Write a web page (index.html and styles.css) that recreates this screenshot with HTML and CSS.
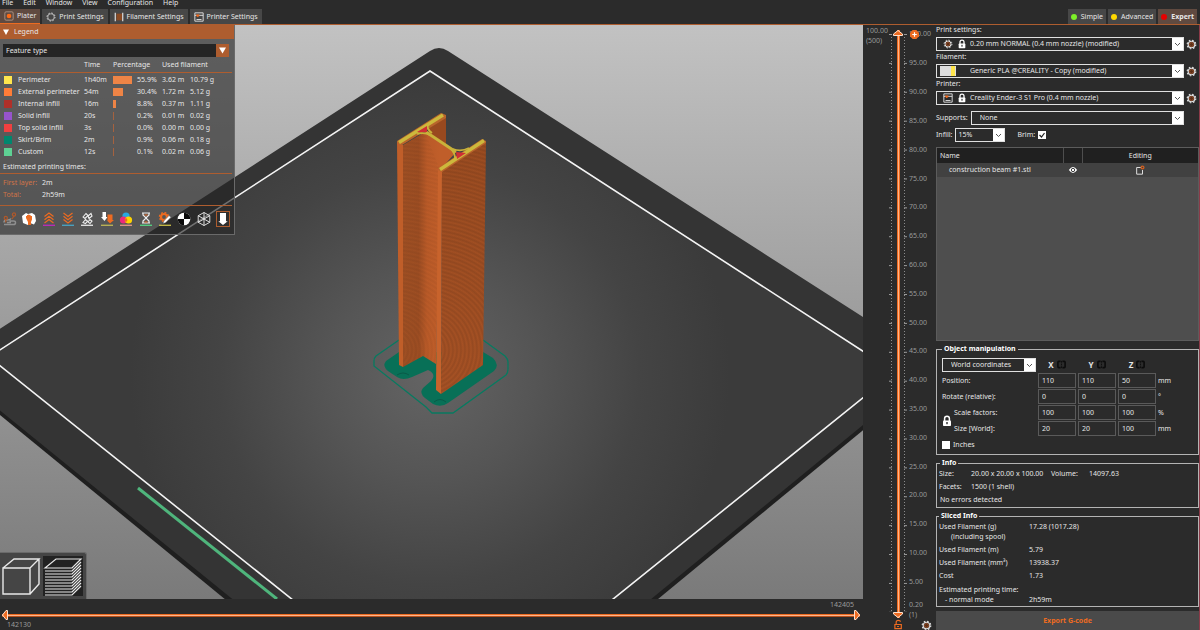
FILE: index.html
```html
<!DOCTYPE html>
<html lang="en">
<head>
  <meta charset="UTF-8">
  <meta name="viewport" content="width=device-width, initial-scale=1.0">
  <title>Slicer - Preview</title>
  <link rel="stylesheet" href="styles.css">
</head>
<body>
  <!-- Shared icons -->
  <svg class="sprite" aria-hidden="true">
    <symbol id="gear" viewBox="0 0 12 12">
      <circle cx="6" cy="6" r="3.6" fill="#2b2b2b" stroke="#e4e4e4" stroke-width="1.2"/>
      <circle cx="6" cy="6" r="4.7" fill="none" stroke="#e4e4e4" stroke-width="1.2" stroke-dasharray="1.8 1.9"/>
      <circle cx="6" cy="6" r="2.2" fill="#5c3018" stroke="#a0522a" stroke-width="1"/>
    </symbol>
    <symbol id="lock" viewBox="0 0 10 12">
      <path d="M2.6 6V3.6a2.4 2.4 0 0 1 4.8 0V6" fill="none" stroke="#fff" stroke-width="1.5"/>
      <rect x="1" y="5.4" width="8" height="5.6" rx=".8" fill="#fff"/>
      <rect x="4.3" y="7" width="1.4" height="2.2" fill="#2b2b2b"/>
    </symbol>
    <symbol id="printer" viewBox="0 0 12 12">
      <path d="M1 1h10v10H1zM1 4h10M3 9h6" fill="none" stroke="#e4e4e4" stroke-width="1.1"/>
      <path d="M2.5 3h4v1.6l-2 1.6-2-1.6z" fill="#ed6b21"/>
    </symbol>
    <symbol id="mirror" viewBox="0 0 10 10">
      <rect x="1" y="1.5" width="8" height="7" rx="1" fill="none" stroke="#0c0c0c" stroke-width="1.8"/>
      <path d="M5 0v10" stroke="#2b2b2b" stroke-width="2"/>
      <path d="M5 1v8" stroke="#0c0c0c" stroke-dasharray="2 1"/>
    </symbol>
  </svg>

  <!-- Menu -->
  <nav class="menubar">
    <a href="#">File</a>
    <a href="#">Edit</a>
    <a href="#">Window</a>
    <a href="#">View</a>
    <a href="#">Configuration</a>
    <a href="#">Help</a>
  </nav>

  <!-- Tabs and modes -->
  <header class="tabbar">
    <div class="tabs">
      <button class="tab active">
        <svg viewBox="0 0 12 12"><rect x="1" y="1" width="10" height="10" rx="1.5" fill="none" stroke="#b59b8c"/><circle cx="6" cy="6" r="2.8" fill="#ff6a14"/></svg>Plater</button>
      <button class="tab">
        <svg viewBox="0 0 12 12"><circle cx="6" cy="6" r="3.9" fill="none" stroke="#ddd" stroke-width=".8"/><circle cx="6" cy="6" r="4.8" fill="none" stroke="#ddd" stroke-width="1.2" stroke-dasharray="1.8 1.95"/></svg>Print Settings</button>
      <button class="tab">
        <svg viewBox="0 0 12 12"><path d="M1.5 1v10M10.5 1v10" stroke="#eee" stroke-width="1.3"/><rect x="3" y="2" width="6.5" height="8" fill="#8c4a22"/></svg>Filament Settings</button>
      <button class="tab"><svg><use href="#printer"/></svg>Printer Settings</button>
    </div>
    <div class="modes">
      <button class="mode"><i class="dot green"></i>Simple</button>
      <button class="mode"><i class="dot yellow"></i>Advanced</button>
      <button class="mode active"><i class="dot red"></i>Expert</button>
    </div>
  </header>

  <main class="workspace">
    <!-- 3D preview -->
    <section class="preview">
      <div class="viewport">
        <svg class="scene" viewBox="0 25 863 574" preserveAspectRatio="xMidYMid slice">
          <defs>
            <linearGradient id="sky" x1="0" y1="0" x2="0" y2="1">
              <stop offset="0" stop-color="#c2c2c2"/>
              <stop offset="1" stop-color="#7a7a7a"/>
            </linearGradient>
            <radialGradient id="bed" gradientUnits="userSpaceOnUse" cx="430" cy="375" r="300">
              <stop offset="0" stop-color="#646464"/>
              <stop offset=".35" stop-color="#555"/>
              <stop offset=".7" stop-color="#444"/>
              <stop offset="1" stop-color="#3b3b3b"/>
            </radialGradient>
            <linearGradient id="inner" gradientUnits="userSpaceOnUse" x1="403" y1="0" x2="440" y2="0">
              <stop offset="0" stop-color="#9c4e23"/>
              <stop offset=".42" stop-color="#9a4c22"/>
              <stop offset=".65" stop-color="#b95a28"/>
              <stop offset="1" stop-color="#c05e2a"/>
            </linearGradient>
            <linearGradient id="side" x1="0" y1="0" x2="0" y2="1">
              <stop offset="0" stop-color="#974a20"/>
              <stop offset="1" stop-color="#a35024"/>
            </linearGradient>
            <radialGradient id="layers" gradientUnits="userSpaceOnUse" cx="425" cy="350" r="4" spreadMethod="repeat">
              <stop offset="0" stop-color="#000" stop-opacity=".07"/>
              <stop offset=".5" stop-color="#d86a2d" stop-opacity=".08"/>
              <stop offset="1" stop-color="#000" stop-opacity=".07"/>
            </radialGradient>
            <radialGradient id="layers2" gradientUnits="userSpaceOnUse" cx="392" cy="350" r="4" spreadMethod="repeat">
              <stop offset="0" stop-color="#000" stop-opacity=".04"/>
              <stop offset=".5" stop-color="#d86a2d" stop-opacity=".05"/>
              <stop offset="1" stop-color="#000" stop-opacity=".04"/>
            </radialGradient>
          </defs>
          <rect y="25" width="863" height="574" fill="url(#sky)"/>
          <!-- bed -->
          <path d="M-56 369 442 777 930 375V350H-56z" fill="#1f1f1f"/>
          <path d="M-56 365 430 51Q439 45 448 51L930 360V370L443 770z" fill="#343434"/>
          <path d="M-11 357 430 71 895 372 453 728z" fill="url(#bed)" stroke="#f4f4f4" stroke-width="1.6"/>
          <path d="M138 488 277 599" stroke="#4fb57c" stroke-width="3"/>
          <!-- skirt and brim -->
          <path d="M399 340 376 356Q374 358 374 361V366L426 407 432 413H453L506 375Q508 373 508 369V362Q508 359 505 356L483 340" fill="none" stroke="#087a60" stroke-width="1.3"/>
          <path d="M399 352 386 361Q382 366 388 371L397 377Q403 381 412 377L428 370Q437 374 431 381L423 388Q419 393 425 398L433 404Q441 408 448 403L494 371Q500 365 493 358L483 352z" fill="#087057"/>
          <path d="M397 375q6-4 12 0M434 402q6-5 12 0" fill="none" stroke="#0a5a48"/>
          <!-- beam -->
          <path d="M428 128 446 116V146L430 140z" fill="#99491f"/>
          <path d="M403 145 425 132 456 152 440 170 436 364 423 356 403 367z" fill="url(#inner)"/>
          <path d="M403 145 425 132 440 170 436 364 423 356 403 367z" fill="url(#layers2)"/>
          <path d="M397 142 403 145V367L399 365z" fill="#c05e29"/>
          <path d="M438 169 442 171 441 394 436 390z" fill="#c8632c"/>
          <path d="M442 171 486 141 483 365 441 394z" fill="url(#side)"/>
          <path d="M442 171 486 141 483 365 441 394z" fill="url(#layers)"/>
          <!-- top layer -->
          <path d="M397 141 441 113 446 115V118L402 145 397 143zM438 168 482 139 486 141V143L442 172 438 170z" fill="#b9652b"/>
          <path d="M426 132 456 152" stroke="#c9b23a" stroke-width="3"/>
          <path d="M417 134Q425 132 430 135M428 124Q426 129 432 133M450 148Q456 153 455 161M453 149Q461 152 469 148" fill="none" stroke="#c9b23a" stroke-width="1.8"/>
          <path d="M399 142.500 443 115M440 169.500 484 140.500" stroke="#cdb83c" stroke-width="3.400"/>
          <path d="M417 132 427 126 427 132zM456 152 466 153 457 159z" fill="#cf2f34"/>
        </svg>

        <!-- Legend -->
        <div class="legend">
          <h2 class="legend-title"><svg viewBox="0 0 8 8"><path d="M1 1.500h6L4 7z" fill="#fff"/></svg>Legend</h2>
          <select class="view-type" aria-label="View type"><option>Feature type</option></select>
          <table class="features">
            <colgroup>
              <col class="col-swatch"><col class="col-name"><col class="col-time"><col class="col-bar"><col class="col-percent"><col class="col-length"><col>
            </colgroup>
            <thead>
              <tr><th></th><th></th><th>Time</th><th colspan="2">Percentage</th><th colspan="2">Used filament</th></tr>
            </thead>
            <tbody>
              <tr><td><i class="swatch perimeter"></i></td><td>Perimeter</td><td>1h40m</td><td><i class="bar" style="width: 19px"></i></td><td>55.9%</td><td>3.62 m</td><td>10.79 g</td></tr>
              <tr><td><i class="swatch external"></i></td><td>External perimeter</td><td>54m</td><td><i class="bar" style="width: 10px"></i></td><td>30.4%</td><td>1.72 m</td><td>5.12 g</td></tr>
              <tr><td><i class="swatch internal"></i></td><td>Internal infill</td><td>16m</td><td><i class="bar" style="width: 3px"></i></td><td>8.8%</td><td>0.37 m</td><td>1.11 g</td></tr>
              <tr><td><i class="swatch solid"></i></td><td>Solid infill</td><td>20s</td><td><i class="bar thin" style="width: 1px"></i></td><td>0.2%</td><td>0.01 m</td><td>0.02 g</td></tr>
              <tr><td><i class="swatch top-solid"></i></td><td>Top solid infill</td><td>3s</td><td><i class="bar thin" style="width: 1px"></i></td><td>0.0%</td><td>0.00 m</td><td>0.00 g</td></tr>
              <tr><td><i class="swatch skirt"></i></td><td>Skirt/Brim</td><td>2m</td><td><i class="bar thin" style="width: 1px"></i></td><td>0.9%</td><td>0.06 m</td><td>0.18 g</td></tr>
              <tr><td><i class="swatch custom"></i></td><td>Custom</td><td>12s</td><td><i class="bar thin" style="width: 1px"></i></td><td>0.1%</td><td>0.02 m</td><td>0.06 g</td></tr>
            </tbody>
          </table>
          <h3 class="times-title">Estimated printing times:</h3>
          <dl class="times">
            <dt>First layer:</dt><dd>2m</dd>
            <dt>Total:</dt><dd>2h59m</dd>
          </dl>
          <div class="view-options">
            <button aria-label="Travel"><svg viewBox="0 0 14 14"><path d="M1 12.500h9.500q2 0 2-1.800t-2-1.700H6.500M1 10.500q0-2.500 3-2.500 3 .3 4-1.500M4 10.500h4" fill="none" stroke="#8f8f8f" stroke-width="1.500"/><circle cx="2.800" cy="6" r="1.600" fill="none" stroke="#b0592b" stroke-width="1.200"/><circle cx="11" cy="2.500" r="1.600" fill="none" stroke="#b0592b" stroke-width="1.200"/><path d="M11 4 9 7M2.800 8v2.500" stroke="#b0592b" stroke-width="1.200"/></svg></button>
            <button aria-label="Wipe"><svg viewBox="0 0 14 14"><path d="M0 4 4 1 6 2 10 1 13 3 14 9 12 12.500 8 11 6 13 1 11z" fill="#fff"/><path d="M4 6V4h1V3h1.200v-.5h1.200V3h1.200v1H10v3.500L9 10v3H6V10z" fill="#ed6b21"/></svg></button>
            <button aria-label="Retractions"><svg viewBox="0 0 14 14"><path d="M2.500 4.500 7 1l4.500 3.500M2.500 7.800 7 4.300l4.500 3.500M2.500 11 7 7.500l4.500 3.500" fill="none" stroke="#ed6b21" stroke-width="1.200"/><path d="M1 13.300h12" stroke="#b72db5" stroke-width="1.400"/></svg></button>
            <button aria-label="Deretractions"><svg viewBox="0 0 14 14"><path d="M2.500 1 7 4.500 11.500 1M2.500 4.300 7 7.800l4.500-3.500M2.500 7.500 7 11l4.500-3.500" fill="none" stroke="#ed6b21" stroke-width="1.200"/><path d="M1 13.300h12" stroke="#4aa0bd" stroke-width="1.400"/></svg></button>
            <button aria-label="Seams"><svg viewBox="0 0 14 14"><path d="M3 5 6 1.500 8 3.500 5 6.500zM8 4 11 1.500 12 4 9 6.500zM3 10.500 5.500 7.500l2 1.500-2 2.500zM8 10 10 7.500l2 1.500-2 2.500z" fill="none" stroke="#eee" stroke-width="1.100"/><path d="M1 13.300h12" stroke="#ddd" stroke-width="1.400"/></svg></button>
            <button aria-label="Tool changes"><svg viewBox="0 0 14 14"><path d="M2.500 0h3.500v5h1.500L4.500 9 1 5h1.500z" fill="#fff"/><path d="M7.500 2.500h5V8H14l-4 3.500L7 8.500h.5z" fill="#ed6b21"/><path d="M1 13.300h12" stroke="#b8b055" stroke-width="1.400"/></svg></button>
            <button aria-label="Color changes"><svg viewBox="0 0 14 14"><circle cx="7" cy="4" r="3.600" fill="#28a8e0"/><circle cx="4.500" cy="8" r="3.600" fill="#ee2a7b"/><circle cx="9.500" cy="8" r="3.600" fill="#ffd400"/><path d="M7 5.500 5.500 8 7 10.500 8.500 8z" fill="#ed6b21"/><path d="M1 13.300h12" stroke="#d99484" stroke-width="1.400"/></svg></button>
            <button aria-label="Print pauses"><svg viewBox="0 0 14 14"><path d="M3 1h8M3 11h8M4 1v2l3 3 3-3V1M4 11V9l3-3 3 3v2" fill="none" stroke="#eee" stroke-width="1.200"/><path d="M5.500 3h3M5.500 10h3" stroke="#ed6b21"/><path d="M1 13.300h12" stroke="#55cc80" stroke-width="1.400"/></svg></button>
            <button aria-label="Custom G-codes"><svg viewBox="0 0 14 14"><circle cx="6" cy="5" r="3" fill="none" stroke="#ed6b21" stroke-width="2.200"/><circle cx="6" cy="5" r="4.600" fill="none" stroke="#ed6b21" stroke-width="1.200" stroke-dasharray="1.900 1.700"/><path d="m5 11.500.8-2.500L11 3.500l2 1.800-5.500 5.500z" fill="#fff" stroke="#555" stroke-width=".5"/><path d="M1 13.300h12" stroke="#c2b545" stroke-width="1.400"/></svg></button>
            <button aria-label="Center of gravity"><svg viewBox="0 0 14 14"><circle cx="7" cy="7" r="6.300" fill="#fff"/><path d="M7 7V.700A6.300 6.300 0 0 1 13.300 7zM7 7v6.300A6.300 6.300 0 0 1 .700 7z" fill="#0b0b0b"/></svg></button>
            <button aria-label="Shells"><svg viewBox="0 0 14 14"><path d="M7 .5 12.800 3.700v6.600L7 13.500 1.200 10.300V3.700zM1.200 3.700 7 7l5.800-3.300M7 .5v13M1.200 10.300 7 7l5.800 3.300" fill="none" stroke="#eee" stroke-width=".9"/></svg></button>
            <button class="on" aria-label="Tool marker"><svg viewBox="0 0 14 14"><path d="M3.500 0h7v9.500h2L7 14 1.500 9.500h2z" fill="#fff"/></svg></button>
          </div>
        </div>

        <!-- View switch -->
        <div class="view-switch">
          <button aria-label="3D editor view"><svg viewBox="0 0 40 40"><path d="M2 12h27v26H2zM2 12 13 3h25L29 12M38 3v25L29 38" fill="none" stroke="#e8e8e8" stroke-width="1.400"/></svg></button>
          <button class="on" aria-label="Preview"><svg viewBox="0 0 40 40"><path d="M2 12 13 3h25L29 12zM2 15h27l9-9M2 18h27l9-9M2 21h27l9-9M2 24h27l9-9M2 27h27l9-9M2 30h27l9-9M2 33h27l9-9M2 36h27l9-9M2 39h27l9-9" fill="none" stroke="#e8e8e8" stroke-width="1.200"/></svg></button>
        </div>
      </div>

      <div class="moves">
        <span class="moves-high">142405</span>
        <div class="moves-track">
          <input type="range" class="low" min="142130" max="142405" value="142130" aria-label="First move">
          <input type="range" class="high" min="142130" max="142405" value="142405" aria-label="Last move">
        </div>
        <span class="moves-low">142130</span>
      </div>
    </section>

    <!-- Layer slider -->
    <section class="layers">
      <p class="layer-now">100.00<br>(500)</p>
      <div class="layer-track">
        <input type="range" class="high" min="1" max="500" value="500" aria-label="Top layer">
        <input type="range" class="low" min="1" max="500" value="1" aria-label="Bottom layer">
        <button class="unlock" aria-label="One layer lock"><svg viewBox="0 0 10 12"><path d="M3 6V3.500Q3 1.500 5.300 1.500T7.700 3" fill="none" stroke="#ed6b21" stroke-width="1.300"/><path d="M1.600 6h7v4.500h-7zM4 8.200h2" fill="none" stroke="#ed6b21" stroke-width="1.300"/></svg></button>
      </div>
      <div class="layer-scale">
        <span class="scale-top">100.00<svg viewBox="0 0 10 10"><path d="M3 0h4l3 3v4l-3 3H3L0 7V3z" fill="#ed6b21"/><path d="M5 2.500v5M2.500 5h5" stroke="#fff" stroke-width="1.300"/></svg></span>
        <ol>
          <li>95.00</li><li>90.00</li><li>85.00</li><li>80.00</li><li>75.00</li><li>70.00</li><li>65.00</li>
          <li>60.00</li><li>55.00</li><li>50.00</li><li>45.00</li><li>40.00</li><li>35.00</li><li>30.00</li>
          <li>25.00</li><li>20.00</li><li>15.00</li><li>10.00</li><li>5.00</li>
        </ol>
        <span class="scale-end">0.20<br>(1)</span>
        <button class="gear" aria-label="Slider settings"><svg><use href="#gear"/></svg></button>
      </div>
    </section>

    <!-- Sidebar -->
    <aside class="sidebar">
      <div class="presets">
        <label for="print">Print settings:</label>
        <div class="preset">
          <div class="combo">
            <select id="print"><option>0.20 mm NORMAL (0.4 mm nozzle) (modified)</option></select>
            <span class="combo-icons"><svg><use href="#gear"/></svg><svg><use href="#lock"/></svg></span>
          </div>
          <button class="gear" aria-label="Edit print settings"><svg><use href="#gear"/></svg></button>
        </div>
        <label for="filament">Filament:</label>
        <div class="preset">
          <div class="combo">
            <select id="filament"><option>Generic PLA @CREALITY - Copy (modified)</option></select>
            <span class="combo-icons"><i class="spool"></i></span>
          </div>
          <button class="gear" aria-label="Edit filament"><svg><use href="#gear"/></svg></button>
        </div>
        <label for="printer-preset">Printer:</label>
        <div class="preset">
          <div class="combo">
            <select id="printer-preset"><option>Creality Ender-3 S1 Pro (0.4 mm nozzle)</option></select>
            <span class="combo-icons"><svg><use href="#printer"/></svg><svg><use href="#lock"/></svg></span>
          </div>
          <button class="gear" aria-label="Edit printer"><svg><use href="#gear"/></svg></button>
        </div>
        <div class="option-row supports">
          <label for="supports">Supports:</label>
          <select id="supports"><option>None</option></select>
        </div>
        <div class="option-row">
          <label for="infill">Infill:</label>
          <select id="infill"><option>15%</option></select>
          <label class="brim-label" for="brim">Brim:</label>
          <input type="checkbox" id="brim" checked>
        </div>
      </div>

      <div class="objects">
        <table>
          <thead><tr><th>Name</th><th></th><th>Editing</th></tr></thead>
          <tbody>
            <tr>
              <td>construction beam #1.stl</td>
              <td><svg viewBox="0 0 12 10"><path d="M1 5q5-7 10 0-5 7-10 0z" fill="#fff"/><circle cx="6" cy="5" r="2" fill="#fff" stroke="#333" stroke-width="1.100"/></svg></td>
              <td><svg viewBox="0 0 12 12"><path d="M7 3H2v8h7V6" fill="none" stroke="#ddd" stroke-width="1.200"/><circle cx="9" cy="3" r="1.700" fill="none" stroke="#d4601f" stroke-width="1.500"/></svg></td>
            </tr>
          </tbody>
        </table>
      </div>

      <fieldset class="manipulation">
        <legend>Object manipulation</legend>
        <div class="manip-grid">
          <select aria-label="Coordinates"><option>World coordinates</option></select>
          <b>X<svg><use href="#mirror"/></svg></b>
          <b>Y<svg><use href="#mirror"/></svg></b>
          <b>Z<svg><use href="#mirror"/></svg></b>
          <span></span>

          <label for="pos-x">Position:</label>
          <input id="pos-x" value="110"><input aria-label="Position Y" value="110"><input aria-label="Position Z" value="50">
          <span>mm</span>

          <label for="rot-x">Rotate (relative):</label>
          <input id="rot-x" value="0"><input aria-label="Rotate Y" value="0"><input aria-label="Rotate Z" value="0">
          <span>°</span>

          <button class="scale-lock" aria-label="Lock scale"><svg><use href="#lock"/></svg></button>
          <label class="indent scale-row" for="scale-x">Scale factors:</label>
          <input id="scale-x" value="100"><input aria-label="Scale Y" value="100"><input aria-label="Scale Z" value="100">
          <span>%</span>

          <label class="indent size-row" for="size-x">Size [World]:</label>
          <input id="size-x" value="20"><input aria-label="Size Y" value="20"><input aria-label="Size Z" value="100">
          <span>mm</span>
        </div>
        <label class="inches"><input type="checkbox">Inches</label>
      </fieldset>

      <fieldset class="info">
        <legend>Info</legend>
        <dl>
          <dt>Size:</dt><dd>20.00 x 20.00 x 100.00</dd>
          <dt>Volume:</dt><dd>14097.63</dd>
          <dt>Facets:</dt><dd>1500 (1 shell)</dd>
        </dl>
        <p>No errors detected</p>
      </fieldset>

      <fieldset class="sliced">
        <legend>Sliced Info</legend>
        <dl>
          <dt>Used Filament (g)<span>(including spool)</span></dt><dd>17.28 (1017.28)</dd>
          <dt>Used Filament (m)</dt><dd>5.79</dd>
          <dt>Used Filament (mm³)</dt><dd>13938.37</dd>
          <dt>Cost</dt><dd>1.73</dd>
          <dt class="wide">Estimated printing time:</dt>
          <dt class="mode-name">- normal mode</dt><dd>2h59m</dd>
        </dl>
      </fieldset>

      <button class="export">Export G-code</button>
    </aside>
  </main>
</body>
</html>
```
FILE: styles.css
```css
/* Reset and Basic Styles */
* {
  margin: 0;
  padding: 0;
  box-sizing: border-box;
}

:root {
  --bg: #2b2b2b;
  --text: #e6e6e6;
  --muted: #9a9a9a;
  --orange: #ed6b21;
  --rust: #ae5d2f;
  --line: #b4b4b4;
}

body {
  height: 100vh;
  display: flex;
  flex-direction: column;
  overflow: hidden;
  background: var(--bg);
  color: var(--text);
  font: 7px/10px "Noto Sans", "Open Sans", sans-serif;
}

button, input, select {
  font: inherit;
  color: inherit;
  background: none;
  border: 0;
  appearance: none;
}

button {
  cursor: pointer;
}

svg {
  display: block;
  flex: none;
}

a {
  color: inherit;
  text-decoration: none;
}

ol {
  list-style: none;
}

.sprite {
  display: none;
}

/* Menu */
.menubar {
  display: flex;
  gap: 10px;
  height: 8px;
  padding: 0 2px;
  line-height: 6px;
}

/* Tabs and modes */
.tabbar {
  display: flex;
  justify-content: space-between;
  padding-top: 1px;
  border-bottom: 1px solid var(--rust);
}

.tabs, .modes {
  display: flex;
  gap: 2px;
}

.modes {
  padding-right: 3px;
}

.tab, .mode {
  display: flex;
  align-items: center;
  height: 15px;
  padding: 0 3px;
  background: #474747;
}

.tab {
  padding: 0 4px;
}

.tab svg {
  width: 10px;
  height: 10px;
  margin-right: 3px;
}

.tab.active, .mode.active {
  background: #604a40;
}

.tab.active {
  border-bottom: 1px solid var(--orange);
}

.mode.active {
  font-weight: 700;
}

.dot {
  width: 6px;
  height: 6px;
  margin-right: 4px;
  border-radius: 50%;
}

.green { background: #7df028; }
.yellow { background: #ffd800; }
.red { background: #e60000; }

/* Workspace */
.workspace {
  flex: 1;
  min-height: 0;
  display: flex;
  border-right: 1px solid #8b3a48;
}

.preview {
  flex: 1;
  min-width: 0;
  display: flex;
  flex-direction: column;
}

.viewport {
  position: relative;
  flex: 1;
  min-height: 0;
  overflow: hidden;
}

.scene {
  width: 100%;
  height: 100%;
}

/* Legend */
.legend {
  position: absolute;
  top: 0;
  left: 0;
  width: 235px;
  padding-bottom: 7px;
  background: rgba(38, 38, 38, 0.64);
  border-right: 1px solid #6a6a6a;
  border-bottom: 1px solid #6a6a6a;
}

.legend-title {
  display: flex;
  align-items: center;
  gap: 4px;
  height: 14px;
  padding-left: 2px;
  background: var(--rust);
  font-size: 7px;
  font-weight: 400;
}

.legend-title svg {
  width: 8px;
  height: 8px;
}

.view-type {
  display: block;
  width: 226px;
  height: 13px;
  margin: 5px 0 1px 3px;
  padding-left: 3px;
  background: #252525 url('data:image/svg+xml,<svg xmlns="http://www.w3.org/2000/svg" viewBox="0 0 13 13"><path fill="%23ae5d2f" d="M0 0h13v13H0z"/><path fill="white" d="M3 3.500h7l-3.500 6z"/></svg>') no-repeat right / 13px 13px;
}

.features {
  table-layout: fixed;
  width: 232px;
  border-collapse: collapse;
  line-height: 12px;
}

.features th {
  height: 14px;
  text-align: left;
  font-weight: 400;
  border-bottom: 1px solid var(--rust);
}

.col-swatch { width: 18px; }
.col-name { width: 66px; }
.col-time { width: 29px; }
.col-bar { width: 24px; }
.col-percent { width: 25px; }
.col-length { width: 28px; }

.features td {
  height: 12px;
  white-space: nowrap;
}

.features tbody tr:first-child td {
  padding-top: 1px;
}

.swatch, .bar {
  display: block;
  height: 8px;
}

.swatch {
  width: 8px;
  margin-left: 4px;
}

.perimeter { background: #ffe64d; }
.external { background: #ff7d38; }
.internal { background: #b03029; }
.solid { background: #9654cc; }
.top-solid { background: #f04040; }
.skirt { background: #00876e; }
.custom { background: #5ed194; }

.bar {
  background: #ee8446;
}

.bar.thin {
  background: #a5623f;
}

.times-title {
  padding: 4px 0 1px 3px;
  font-size: 7px;
  font-weight: 400;
}

.times {
  display: grid;
  grid-template-columns: 39px 1fr;
  width: 232px;
  padding: 3px 0 4px 3px;
  border-top: 1px solid var(--rust);
  border-bottom: 1px solid var(--rust);
  line-height: 12px;
}

.times dt {
  color: #d07448;
}

.view-options {
  display: flex;
  align-items: center;
  justify-content: space-between;
  padding: 5px 4px 0 3px;
}

.view-options svg {
  width: 14px;
  height: 14px;
}

.view-options .on {
  border: 1px solid var(--rust);
}

.view-options .on svg {
  width: 12px;
}

/* View switch */
.view-switch {
  position: absolute;
  left: 0;
  bottom: 0;
  display: flex;
  gap: 2px;
  padding: 3px 3px 3px 1px;
  background: #454545;
  border-top: 1px solid #6a6a6a;
  border-right: 1px solid #6a6a6a;
  border-radius: 0 3px 0 0;
}

.view-switch svg {
  width: 40px;
  height: 40px;
}

.view-switch .on {
  background: #222;
}

/* Horizontal moves slider */
.moves {
  display: flex;
  flex-direction: column;
  height: 31px;
  padding: 1px 3px 0 2px;
  color: var(--muted);
}

.moves-high {
  align-self: flex-end;
  padding-right: 6px;
}

.moves-low {
  padding-left: 5px;
}

.moves-track {
  position: relative;
  height: 10px;
}

.moves-track input {
  position: absolute;
  inset: 0;
  width: 100%;
  height: 10px;
}

.moves-track .low {
  background: linear-gradient(var(--orange) 1px, #ffb58a 1px, #ffb58a 2px, #b5501c 2px) center / 100% 3px no-repeat;
}

.moves-track input::-webkit-slider-thumb {
  appearance: none;
  width: 6px;
  height: 10px;
  background: url('data:image/svg+xml,<svg xmlns="http://www.w3.org/2000/svg" viewBox="0 0 6 10"><path fill="%23ed6b21" stroke="%23ffe0cc" d="M5.500.5v9H4L.5 5 4 .5z"/></svg>') no-repeat;
}

.moves-track .high::-webkit-slider-thumb {
  background: url('data:image/svg+xml,<svg xmlns="http://www.w3.org/2000/svg" viewBox="0 0 6 10"><path fill="%23ed6b21" stroke="%23ffe0cc" d="M.5.5v9H2L5.500 5 2 .5z"/></svg>') no-repeat;
}

/* Vertical layer slider */
.layers {
  display: flex;
  width: 73px;
  color: var(--muted);
}

.layer-now {
  width: 25px;
  padding: 1px 0 0 3px;
}

.layer-track {
  position: relative;
  width: 20px;
  display: flex;
  flex-direction: column;
  justify-content: flex-end;
}

.layer-track::before,
.layer-track::after {
  content: "";
  position: absolute;
  top: 9px;
  bottom: 18px;
  left: 1px;
  width: 3px;
  background:
    linear-gradient(var(--muted) 1px, transparent 1px) 0 0 / 100% 5%,
    linear-gradient(#8c8c8c 1px, transparent 1px) 2px 0 / 100% 3px;
  background-repeat: repeat-y;
}

.layer-track::after {
  left: 16px;
  background-position: 0 0, -2px 0;
}

.layer-track input {
  position: absolute;
  top: 5px;
  left: 5px;
  width: 10px;
  height: calc(100% - 17px);
  writing-mode: vertical-lr;
  direction: rtl;
}

.layer-track .high {
  background:
    linear-gradient(90deg, var(--orange) 1px, #ffb58a 1px, #ffb58a 2px, var(--orange) 2px) center / 3px 100% no-repeat;
}

.layer-track input::-webkit-slider-thumb {
  appearance: none;
  width: 10px;
  height: 6px;
  background: url('data:image/svg+xml,<svg xmlns="http://www.w3.org/2000/svg" viewBox="0 0 10 6"><path fill="%23ed6b21" stroke="%23ffe0cc" d="M.5 5.500h9V4L5 .5.5 4z"/></svg>') no-repeat;
}

.layer-track .low::-webkit-slider-thumb {
  background: url('data:image/svg+xml,<svg xmlns="http://www.w3.org/2000/svg" viewBox="0 0 10 6"><path fill="%23ed6b21" stroke="%23ffe0cc" d="M.5.5h9V2L5 5.500.5 2z"/></svg>') no-repeat;
}

.unlock {
  align-self: center;
}

.unlock svg {
  width: 10px;
  height: 11px;
}

.layer-scale {
  flex: 1;
  display: flex;
  flex-direction: column;
  padding-left: 1px;
}

.scale-top {
  position: relative;
  height: 24px;
  padding-top: 4px;
}

.scale-top svg {
  position: absolute;
  top: 5px;
  left: 1px;
  width: 9px;
  height: 9px;
}

.layer-scale ol {
  flex: 1;
  display: flex;
  flex-direction: column;
}

.layer-scale li {
  flex: 1;
  display: flex;
  align-items: center;
}

.scale-end {
  padding-top: 4px;
}

.layer-scale .gear {
  margin-left: 12px;
  height: 10px;
}

.gear svg {
  width: 11px;
  height: 11px;
}

/* Sidebar */
.sidebar {
  width: 263px;
  display: flex;
  flex-direction: column;
}

.presets > label {
  display: block;
  height: 11px;
}

.preset {
  display: flex;
  align-items: center;
  gap: 2px;
  height: 16px;
  padding-right: 2px;
}

.combo {
  position: relative;
  flex: 1;
}

.sidebar select {
  display: block;
  width: 100%;
  height: 14px;
  padding: 0 14px 0 8px;
  border: 1px solid #e0e0e0;
  background: var(--bg) url('data:image/svg+xml,<svg xmlns="http://www.w3.org/2000/svg" viewBox="0 0 11 12"><path fill="white" d="M0 0h11v12H0z"/><path fill="none" stroke="%23555" d="M3 5l2.500 2.500L8 5"/></svg>') no-repeat right / 11px 12px;
}

.sidebar .combo select {
  padding-left: 33px;
}

.combo-icons {
  position: absolute;
  top: 2px;
  left: 7px;
  display: flex;
  align-items: center;
  gap: 4px;
  pointer-events: none;
}

.combo-icons svg {
  width: 10px;
  height: 10px;
}

.spool {
  width: 16px;
  height: 10px;
  margin-left: -3px;
  background: linear-gradient(90deg, #ddd 11px, #ffe64d 11px, #ffe64d 15px, #ddd 15px);
}

.option-row {
  display: flex;
  align-items: center;
  height: 17px;
  gap: 3px;
}

.supports {
  margin-top: 3px;
  padding-right: 15px;
}

.sidebar .supports select {
  flex: 1;
}

.sidebar #infill {
  width: 50px;
  padding-left: 2px;
}

.brim-label {
  margin-left: 9px;
}

input[type="checkbox"] {
  width: 8px;
  height: 8px;
  background: #fff;
}

input[type="checkbox"]:checked {
  background: #fff url('data:image/svg+xml,<svg xmlns="http://www.w3.org/2000/svg" viewBox="0 0 8 8"><path fill="none" stroke="%23222" stroke-width="1.200" d="M1.500 4l2 2 3-4"/></svg>') no-repeat;
}

/* Object list */
.objects {
  flex: 1;
  margin-top: 4px;
  background: #4e4e4e;
  border: 1px solid #5c5c5c;
}

.objects table {
  table-layout: fixed;
  width: 100%;
  border-collapse: collapse;
}

.objects th {
  height: 15px;
  background: #202020;
  font-weight: 400;
}

.objects th:first-child {
  width: 126px;
  padding-left: 3px;
  text-align: left;
}

.objects th:nth-child(2) {
  width: 19px;
  border: solid #4e4e4e;
  border-width: 0 1px;
}

.objects td {
  height: 14px;
  background: #414141;
}

.objects td:first-child {
  padding-left: 12px;
}

.objects td svg {
  width: 10px;
  height: 10px;
  margin: 0 auto;
}

/* Groups */
fieldset {
  border: 1px solid var(--line);
}

legend {
  padding: 0 2px;
  font-weight: 700;
  color: #fff;
}

.manipulation {
  margin-top: 3px;
  padding: 3px 5px 4px;
}

.manip-grid {
  display: grid;
  grid-template-columns: 94px 38px 38px 38px 1fr;
  grid-auto-rows: 15px;
  gap: 1px 2px;
  align-items: center;
}

.manip-grid b {
  display: flex;
  align-items: center;
  justify-content: center;
  gap: 3px;
  font-size: 8px;
}

.manip-grid b svg {
  width: 9px;
  height: 9px;
}

.manip-grid input {
  width: 38px;
  height: 15px;
  padding: 0 3px 1px;
  border: 1px solid #5a5a5a;
}

.indent {
  grid-column: 1;
  padding-left: 12px;
}

.scale-lock {
  grid-column: 1;
  grid-row: 4 / span 2;
  width: 10px;
}

.scale-lock svg {
  width: 10px;
  height: 12px;
}

.scale-row {
  grid-row: 4;
}

.size-row {
  grid-row: 5;
}

.inches {
  display: flex;
  align-items: center;
  gap: 3px;
  padding-top: 4px;
}

.info {
  margin-top: 3px;
  padding: 1px 3px 2px;
}

.info dl {
  display: grid;
  grid-template-columns: 30px 78px 36px 1fr;
  gap: 3px 2px;
  margin-left: -1px;
}

.info p {
  padding-top: 3px;
}

.sliced {
  margin-top: 3px;
  padding: 1px 2px;
}

.sliced dl {
  display: grid;
  grid-template-columns: 90px 1fr;
  row-gap: 3px;
}

.sliced dt span {
  display: block;
  padding-left: 12px;
}

.sliced .wide {
  grid-column: 1 / -1;
  margin: 1px 0 -3px;
}

.mode-name {
  padding-left: 6px;
}

.export {
  height: 19px;
  margin-top: 4px;
  background: #4a4a4a;
  color: var(--orange);
  font-weight: 700;
}
```
